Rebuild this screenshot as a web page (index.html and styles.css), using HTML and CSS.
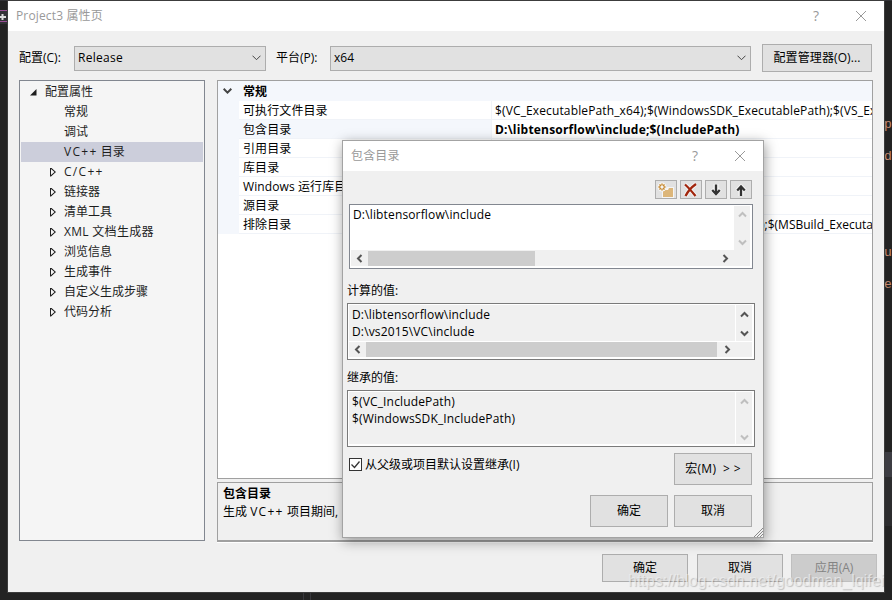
FILE: index.html
```
<!DOCTYPE html>
<html lang="zh-CN">
  <head>
    <meta charset="UTF-8" />
    <title>Project3 属性页</title>
    <link rel="stylesheet" href="styles.css">
  </head>
  <body>
    <!-- Editor behind the windows -->
    <div class="editor">
      <div class="strip-top"></div>
      <div class="tool-mark">
        <svg width="8" height="14" viewBox="0 0 8 14"><path d="M0 .5h8M0 11.500h8" stroke="#9b4f96" /><path d="M0 7h6M2.500 4v6" stroke="#ddd" stroke-width="2" /></svg>
      </div>
      <span class="code code-1">p</span>
      <span class="code code-2">d</span>
      <span class="code code-3">u</span>
      <span class="code code-4">e</span>
      <div class="panel-tab"></div>
      <div class="panel-body"></div>
      <div class="splitter"></div>
    </div>

    <!-- Property pages -->
    <div class="window main-window">
      <div class="title-bar">
        <span class="title">Project3 属性页</span>
        <span class="help">?</span>
        <svg class="close" width="12" height="12" viewBox="0 0 12 12"><path d="M1 1l10 10M11 1L1 11" /></svg>
      </div>

      <div class="config-row">
        <label class="config-label">配置(C):</label>
        <div class="combo combo-config"><span class="wide">Release</span><svg width="9" height="6" viewBox="0 0 9 6"><path d="M.5.7l4 4 4-4" /></svg></div>
        <label class="platform-label">平台(P):</label>
        <div class="combo combo-platform"><span>x64</span><svg width="9" height="6" viewBox="0 0 9 6"><path d="M.5.7l4 4 4-4" /></svg></div>
        <div class="btn btn-manager">配置管理器(O)...</div>
      </div>

      <div class="content">
        <div class="tree">
          <div class="node root"><svg width="7" height="7" viewBox="0 0 7 7"><path d="M6.500 0v6.500H0z" fill="#1e1e1e" /></svg>配置属性</div>
          <div class="node">常规</div>
          <div class="node">调试</div>
          <div class="node selected"><span class="plus">VC++</span> 目录</div>
          <div class="node parent plus">C/C++</div>
          <div class="node parent">链接器</div>
          <div class="node parent">清单工具</div>
          <div class="node parent wide">XML 文档生成器</div>
          <div class="node parent">浏览信息</div>
          <div class="node parent">生成事件</div>
          <div class="node parent">自定义生成步骤</div>
          <div class="node parent">代码分析</div>
        </div>

        <div class="right">
          <div class="grid">
            <div class="group"><svg width="9" height="6" viewBox="0 0 9 6"><path d="M.7.8l3.800 3.800L8.300.8" /></svg><span>常规</span></div>
            <div class="prop"><div class="name">可执行文件目录</div><div class="value">$(VC_ExecutablePath_x64);$(WindowsSDK_ExecutablePath);$(VS_ExecutablePath)</div></div>
            <div class="prop current"><div class="name">包含目录</div><div class="value bold">D:\libtensorflow\include;$(IncludePath)</div></div>
            <div class="prop"><div class="name">引用目录</div><div class="value"></div></div>
            <div class="prop"><div class="name">库目录</div><div class="value"></div></div>
            <div class="prop"><div class="name">Windows 运行库目录</div><div class="value"></div></div>
            <div class="prop"><div class="name">源目录</div><div class="value"></div></div>
            <div class="prop"><div class="name">排除目录</div><div class="value exclude">);$(MSBuild_ExecutablePath)</div></div>
          </div>
          <div class="description">
            <b>包含目录</b>
            <p>生成 <span class="plus">VC++</span> 项目期间,</p>
          </div>
        </div>
      </div>

      <div class="footer">
        <div class="btn">确定</div>
        <div class="btn">取消</div>
        <div class="btn disabled">应用(A)</div>
      </div>
    </div>

    <!-- Include directories -->
    <div class="window dialog">
      <div class="title-bar">
        <span class="title">包含目录</span>
        <span class="help">?</span>
        <svg class="close" width="12" height="12" viewBox="0 0 12 12"><path d="M1 1l10 10M11 1L1 11" /></svg>
      </div>

      <div class="tools">
        <div class="tool">
          <svg width="18" height="16" viewBox="0 0 18 16"><path d="M5 7h4l1-2h7v11H5z" fill="#f5f5f5" /><path d="M6 8h5l1-2h4v9H6z" fill="#dcb67a" /><circle cx="5" cy="5" r="4.500" fill="#f5f5f5" /><path d="M5 1.500v2M5 6.500v2M1.500 5h2M6.500 5h2M2.500 2.500l1.300 1.300M6.200 6.200l1.300 1.300M7.500 2.500L6.200 3.800M3.800 6.200L2.500 7.500" stroke="#c27d1a" stroke-width="1.300" /></svg>
        </div>
        <div class="tool">
          <svg width="18" height="16" viewBox="0 0 18 16"><path d="M3 2.500Q7 6 13.500 14M14 2Q7 7 3.500 14" fill="none" stroke="#f5f5f5" stroke-width="4" /><path d="M3 2.500Q7 6 13.500 14M14 2Q7 7 3.500 14" fill="none" stroke="#a1260d" stroke-width="2.300" /></svg>
        </div>
        <div class="tool">
          <svg width="18" height="16" viewBox="0 0 18 16"><path d="M9 2v10M5 7l4 4 4-4" fill="none" stroke="#f5f5f5" stroke-width="5" /><path d="M9 2.500v10M5.200 8L9 12l3.800-4" fill="none" stroke="#333" stroke-width="2.300" /></svg>
        </div>
        <div class="tool">
          <svg width="18" height="16" viewBox="0 0 18 16"><path d="M9 14V4M5 9l4-4 4 4" fill="none" stroke="#f5f5f5" stroke-width="5" /><path d="M9 14V4M5.200 8.500L9 4.500l3.800 4" fill="none" stroke="#333" stroke-width="2.300" /></svg>
        </div>
      </div>

      <div class="list edit-list">
        <div class="list-main">
          <div class="lines">D:\libtensorflow\include</div>
          <div class="vscroll faded">
            <svg width="9" height="7" viewBox="0 0 9 7"><path d="M1 5.500L4.500 2 8 5.500" /></svg>
            <svg width="9" height="7" viewBox="0 0 9 7"><path d="M1 1.500L4.500 5 8 1.500" /></svg>
          </div>
        </div>
        <div class="hscroll">
          <svg width="7" height="9" viewBox="0 0 7 9"><path d="M5.500 1L2 4.500 5.500 8" /></svg>
          <div class="thumb"></div>
          <svg width="7" height="9" viewBox="0 0 7 9"><path d="M1.500 1L5 4.500 1.500 8" /></svg>
        </div>
      </div>

      <div class="caption">计算的值:</div>
      <div class="list readonly computed">
        <div class="list-main">
          <div class="lines">D:\libtensorflow\include<br>D:\vs2015\VC\include</div>
          <div class="vscroll">
            <svg width="9" height="7" viewBox="0 0 9 7"><path d="M1 5.500L4.500 2 8 5.500" /></svg>
            <svg width="9" height="7" viewBox="0 0 9 7"><path d="M1 1.500L4.500 5 8 1.500" /></svg>
          </div>
        </div>
        <div class="hscroll">
          <svg width="7" height="9" viewBox="0 0 7 9"><path d="M5.500 1L2 4.500 5.500 8" /></svg>
          <div class="thumb"></div>
          <svg width="7" height="9" viewBox="0 0 7 9"><path d="M1.500 1L5 4.500 1.500 8" /></svg>
        </div>
      </div>

      <div class="caption">继承的值:</div>
      <div class="list readonly inherited">
        <div class="list-main">
          <div class="lines">$(VC_IncludePath)<br>$(WindowsSDK_IncludePath)</div>
          <div class="vscroll faded">
            <svg width="9" height="7" viewBox="0 0 9 7"><path d="M1 5.500L4.500 2 8 5.500" /></svg>
            <svg width="9" height="7" viewBox="0 0 9 7"><path d="M1 1.500L4.500 5 8 1.500" /></svg>
          </div>
        </div>
      </div>

      <div class="inherit-row">
        <div class="check">
          <svg width="13" height="13" viewBox="0 0 13 13"><rect x=".5" y=".5" width="12" height="12" fill="#fff" stroke="#333" /><path d="M2.500 6.500l3 3 5-6" fill="none" stroke="#333" stroke-width="1.300" /></svg>
          <span>从父级或项目默认设置继承(I)</span>
        </div>
        <div class="btn wide">宏(M) &nbsp;&gt;&nbsp;&gt;</div>
      </div>
      <div class="dialog-buttons">
        <div class="btn">确定</div>
        <div class="btn">取消</div>
      </div>
      <svg class="grip" width="9" height="9" viewBox="0 0 9 9"><path d="M0 9l9-9M3 9l6-6M6 9l3-3" stroke="#888" /></svg>
    </div>

    <div class="watermark">https://blog.csdn.net/goodman_lqifei</div>
  </body>
</html>
```

FILE: styles.css
```
* {
  box-sizing: border-box;
}

body {
  margin: 0;
  width: 892px;
  height: 600px;
  position: relative;
  overflow: hidden;
  background: #232323;
  color: #000;
  font: 12px/16px "Open Sans", "Noto Sans CJK SC", sans-serif;
  white-space: nowrap;
}

p {
  margin: 0;
}

svg {
  display: block;
  flex: none;
}

.wide {
  letter-spacing: 0.3px;
}

.plus {
  letter-spacing: 1.3px;
}

/* Editor */
.editor {
  position: absolute;
  inset: 0;
}

.strip-top {
  position: absolute;
  left: 0;
  top: 0;
  width: 892px;
  height: 1px;
  background: #333337;
}

.tool-mark {
  position: absolute;
  left: 0;
  top: 10px;
  background: #333337;
}

.code {
  position: absolute;
  left: 884px;
  color: #c58a70;
  font: 13px/16px "Liberation Mono", monospace;
}

.code-1 { top: 117px; }
.code-2 { top: 149px; }
.code-3 { top: 245px; }
.code-4 { top: 277px; }

.panel-tab {
  position: absolute;
  left: 884px;
  top: 452px;
  width: 8px;
  height: 25px;
  background: #3c3c42;
}

.panel-body {
  position: absolute;
  left: 884px;
  top: 477px;
  width: 8px;
  height: 49px;
  background: #2c2c2e;
}

.splitter {
  position: absolute;
  left: 303px;
  top: 592px;
  width: 8px;
  height: 8px;
  border: solid #38383c;
  border-width: 0 1px;
}

/* Windows */
.window {
  position: absolute;
  display: flex;
  flex-direction: column;
  background: #f0f0f0;
}

.main-window {
  left: 8px;
  top: 1px;
  width: 876px;
  height: 591px;
  box-shadow: 0 0 0 1px #3c3c3c;
}

.title-bar {
  flex: none;
  display: flex;
  align-items: center;
  height: 30px;
  padding: 0 17px 0 8px;
  background: #fff;
  color: #999;
}

.title {
  flex: 1;
  letter-spacing: 0.15px;
}

.help {
  width: 10px;
  margin-right: 32px;
  font-size: 14px;
}

.close {
  fill: none;
  stroke: #999;
}

.btn {
  display: flex;
  align-items: center;
  justify-content: center;
  background: #e1e1e1;
  border: 1px solid #adadad;
}

.disabled {
  background: #ccc;
  border-color: #bfbfbf;
  color: #838383;
}

.config-row {
  display: flex;
  align-items: center;
  height: 28px;
  margin-top: 13px;
  padding-left: 11px;
}

.config-label {
  width: 55px;
}

.platform-label {
  width: 54px;
}

.combo {
  display: flex;
  align-items: center;
  justify-content: space-between;
  height: 25px;
  padding: 0 4px 0 3px;
  background: #e1e1e1;
  border: 1px solid #adadad;
}

.combo svg,
.group svg {
  fill: none;
  stroke: #444;
}

.combo-config {
  width: 192px;
  margin-right: 10px;
}

.combo-platform {
  width: 421px;
}

.btn-manager {
  width: 110px;
  height: 28px;
  margin-left: 11px;
  letter-spacing: 0.1px;
}

.content {
  display: flex;
  gap: 12px;
  margin: 8px 11px 0;
}

/* Tree */
.tree {
  width: 186px;
  height: 461px;
  padding: 1px;
  background: #f5f5f5;
  border: 1px solid #828790;
  color: #1e1e1e;
}

.node {
  display: flex;
  align-items: center;
  height: 20px;
  padding-left: 43px;
  white-space: pre;
}

.root {
  gap: 8px;
  padding-left: 9px;
}

.selected {
  background: #cccedb;
}

.parent::before {
  content: "";
  flex: none;
  width: 6px;
  height: 9px;
  margin: 0 8px 0 -14px;
  background: #1e1e1e;
  clip-path: polygon(evenodd, 0 0, 1px 0, 6px 4.5px, 1px 9px, 0 9px, 0 0, 1px 1.5px, 1px 7.5px, 4.5px 4.5px, 1px 1.5px);
}

/* Property grid */
.right {
  width: 656px;
}

.grid {
  height: 399px;
  overflow: hidden;
  background: #fff;
  border: 1px solid #a0a0a0;
}

.group {
  display: flex;
  align-items: center;
  gap: 11px;
  height: 20px;
  padding-left: 5px;
  background: #f4f7fc;
  font-weight: bold;
}

.group span {
  padding-top: 2px;
}

.group svg {
  stroke-width: 2;
}

.prop {
  display: flex;
  height: 19px;
  border-left: 21px solid #f4f7fc;
}

.name,
.value {
  height: 19px;
  padding-left: 4px;
  border-bottom: 1px solid #f0f3f8;
  line-height: 20px;
  letter-spacing: 0.1px;
}

.name {
  flex: none;
  width: 252px;
}

.value {
  flex: 1;
  min-width: 0;
  overflow: hidden;
  border-left: 1px solid #f0f3f8;
  padding-left: 3px;
  letter-spacing: 0.13px;
}

.current .name {
  background: #f4f7fc;
}

.bold {
  font-weight: bold;
  letter-spacing: 0.2px;
}

.exclude {
  padding-left: 269px;
  letter-spacing: 0;
}

.description {
  height: 60px;
  margin-top: 3px;
  padding: 2px 5px;
  border: 1px solid #a0a0a0;
  border-bottom-width: 2px;
  box-shadow: 0 1px #fff;
  line-height: 18px;
}

.description b {
  display: block;
}

.footer {
  display: flex;
  justify-content: flex-end;
  margin: 12px 7px 0 0;
}

.footer .btn {
  width: 86px;
  height: 28px;
  margin-left: 9px;
}

.footer .disabled {
  margin-left: 8px;
}

/* Dialog */
.dialog {
  left: 342px;
  top: 140px;
  width: 422px;
  height: 398px;
  border: 1px solid #a3a3a3;
  box-shadow: 1px 3px 12px rgba(0, 0, 0, 0.4);
}

.tools {
  display: flex;
  justify-content: flex-end;
  gap: 3px;
  margin: 9px 11px 0 0;
}

.tool {
  display: flex;
  align-items: center;
  justify-content: center;
  width: 22px;
  height: 19px;
  background: #e1e1e1;
  border: 1px solid #adadad;
}

.list {
  flex: none;
  display: flex;
  flex-direction: column;
  margin-left: 4px;
  width: 408px;
  padding: 1px 2px 2px 1px;
  border: 1px solid #7a7a7a;
  background: #fff;
}

.edit-list {
  width: 404px;
  height: 65px;
  margin: 5px 0 0 6px;
  border-color: #828790;
}

.list-main {
  flex: 1;
  display: flex;
}

.lines {
  flex: 1;
  padding-left: 2px;
  line-height: 17px;
  letter-spacing: 0.15px;
}

.readonly .lines {
  margin-right: 1px;
  padding: 1px 0 0 3px;
  background: #f0f0f0;
}

.vscroll {
  display: flex;
  flex-direction: column;
  align-items: center;
  justify-content: space-between;
  width: 16px;
  padding: 5px 0 4px;
  background: #f0f0f0;
}

.vscroll svg,
.hscroll svg {
  fill: none;
  stroke: #555;
  stroke-width: 2;
}

.faded svg {
  stroke: #bfbfbf;
}

.hscroll {
  display: flex;
  align-items: center;
  height: 16px;
  padding-left: 5px;
  background: #f0f0f0;
}

.thumb {
  width: 167px;
  height: 15px;
  margin: 0 187px 0 5px;
  background: #cdcdcd;
}

.computed {
  height: 57px;
}

.computed .thumb {
  width: 351px;
  margin-right: 7px;
}

.computed .hscroll {
  border-top: 1px solid #fff;
}

.computed .vscroll {
  padding: 6px 0 4px;
}

.inherited {
  height: 57px;
}

.inherited .vscroll {
  padding: 6px 0 3px;
}

.caption {
  flex: none;
  padding-left: 4px;
  height: 34px;
  line-height: 44px;
}

.computed + .caption {
  height: 30px;
  line-height: 36px;
}

.inherit-row {
  display: flex;
  justify-content: space-between;
  margin: 6px 11px 0 6px;
}

.check {
  display: flex;
  align-items: center;
  gap: 3px;
  height: 23px;
}

.inherit-row .btn,
.dialog-buttons .btn {
  width: 78px;
  height: 32px;
}

.dialog-buttons {
  display: flex;
  justify-content: flex-end;
  gap: 6px;
  margin: 10px 11px 0 0;
}

.grip {
  position: absolute;
  right: 0;
  bottom: 0;
}

.watermark {
  position: absolute;
  left: 628px;
  top: 571px;
  color: rgba(240, 240, 240, 0.7);
  font: 16px/20px "Liberation Sans", Arial, sans-serif;
  text-shadow: 1px 1px 1px rgba(0, 0, 0, 0.2);
}
```
